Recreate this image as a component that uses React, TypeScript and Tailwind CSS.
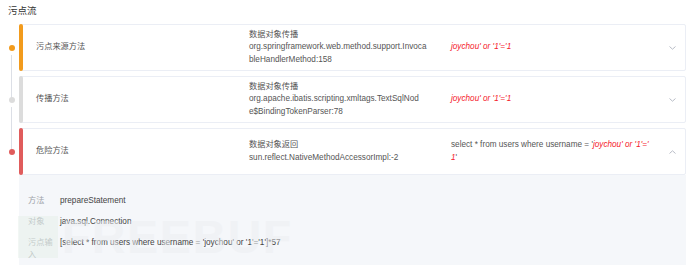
import React from "react";

type Step = {
  label: string;
  bar: string;
  dot: string;
  kind: string;
  where: string[];
  value: React.ReactNode;
  open?: boolean;
};

const taint = "joychou' or '1'='1";

const steps: Step[] = [
  {
    label: "污点来源方法",
    bar: "bg-[#f29b1d]",
    dot: "bg-[#f29b1d]",
    kind: "数据对象传播",
    where: ["org.springframework.web.method.support.Invoca", "bleHandlerMethod:158"],
    value: <span className="italic text-[#f5222d]">{taint}</span>,
  },
  {
    label: "传播方法",
    bar: "bg-[#dcdcdc]",
    dot: "bg-[#dcdcdc]",
    kind: "数据对象传播",
    where: ["org.apache.ibatis.scripting.xmltags.TextSqlNod", "e$BindingTokenParser:78"],
    value: <span className="italic text-[#f5222d]">{taint}</span>,
  },
  {
    label: "危险方法",
    bar: "bg-[#e05c5c]",
    dot: "bg-[#e05c5c]",
    kind: "数据对象返回",
    where: ["sun.reflect.NativeMethodAccessorImpl:-2"],
    value: (
      <>
        select * from users where username = '
        <span className="italic text-[#f5222d]">
          joychou' or '1'='
          <br />1
        </span>
        '
      </>
    ),
    open: true,
  },
];

const details = [
  { k: "方法", v: "prepareStatement" },
  { k: "对象", v: "java.sql.Connection" },
  { k: "污点输入", v: "[select * from users where username = 'joychou' or '1'='1']*57" },
];

function Chevron({ up }: { up?: boolean }) {
  return (
    <svg width="7" height="4" viewBox="0 0 7 4" className="text-[#b8bcc6]">
      <path
        d={up ? "M0.5 3.5 L3.5 0.8 L6.5 3.5" : "M0.5 0.5 L3.5 3.2 L6.5 0.5"}
        fill="none"
        stroke="currentColor"
        strokeWidth="1"
      />
    </svg>
  );
}

function Row({ step, last }: { step: Step; last: boolean }) {
  return (
    <div className="flex">
      {/* timeline */}
      <div className="relative w-[19px] shrink-0">
        <div className={`absolute left-[8.5px] top-[21px] h-[6px] w-[6px] rounded-full ${step.dot}`} />
        {!last && <div className="absolute left-[11px] top-[31px] h-[45px] w-px bg-[#dcdfe6]" />}
      </div>
      <div className="flex-1 mr-[4px]">
        <div className="flex h-[47px] border border-[#ebeef5] rounded-[2px] bg-white">
          <div className={`w-[4px] shrink-0 rounded-[3px] -ml-px -my-px ${step.bar}`} />
          <div className="grid flex-1 grid-cols-[213px_202px_1fr_auto] items-center pl-[13px] pr-[9px] text-[8.2px] leading-[12.3px] text-[#555]">
            <div>{step.label}</div>
            <div className="whitespace-nowrap">
              <div>{step.kind}</div>
              {step.where.map((w) => (
                <div key={w}>{w}</div>
              ))}
            </div>
            <div className="whitespace-nowrap">{step.value}</div>
            <Chevron up={step.open} />
          </div>
        </div>
        {step.open && (
          <div className="bg-[#f5f7fa] pl-[9px] pt-[20px] pb-[10px] text-[8.2px] leading-[12.3px]">
            {details.map((d) => (
              <div key={d.k} className="flex mb-[8.7px]">
                <div className="w-[32px] shrink-0 text-[#a0a3a9]">{d.k}</div>
                <div className="text-[#444]">{d.v}</div>
              </div>
            ))}
          </div>
        )}
      </div>
    </div>
  );
}

export default function App() {
  return (
    <div
      className="relative w-[690px] h-[265px] overflow-hidden bg-white"
      style={{ fontFamily: '"Liberation Sans", "Noto Sans CJK SC", sans-serif' }}
    >
      <div className="h-[24px] pl-[8px] pt-[4px] text-[9.5px] text-[#333]">污点流</div>
      <div className="flex flex-col gap-[5px]">
        {steps.map((s, i) => (
          <Row key={s.label} step={s} last={i === steps.length - 1} />
        ))}
      </div>
      {/* watermark */}
      <div className="pointer-events-none absolute left-[18px] top-[214px] flex items-center gap-[4px] opacity-50">
        <div className="h-[42px] w-[40px] bg-[#e6f1ea]" />
        <div className="text-[46px] font-bold leading-none tracking-[2px] text-[#eceef2]">FREEBUF</div>
      </div>
    </div>
  );
}
